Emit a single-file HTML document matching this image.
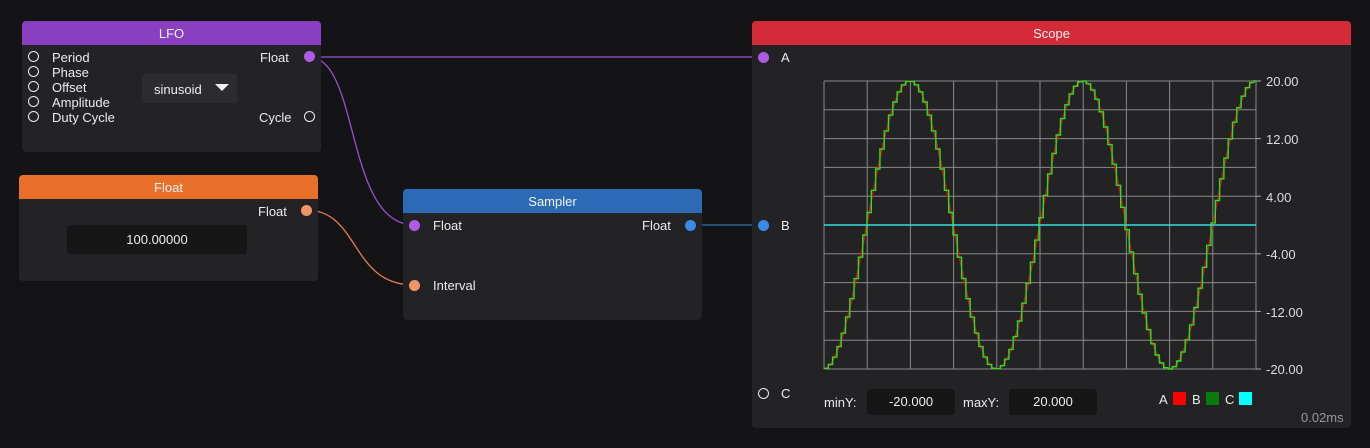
<!DOCTYPE html>
<html><head><meta charset="utf-8"><style>
body{margin:0;width:1370px;height:448px;background:#141416;overflow:hidden;position:relative;font-family:"Liberation Sans",sans-serif;color:#ececec;font-size:13px}
.node{position:absolute;background:#232325;border-radius:4px;overflow:hidden}
.hd{height:24px;line-height:26px;text-align:center;color:#f2f2f2;font-size:13px}
.t{position:absolute;white-space:nowrap;line-height:15px}
.pin{position:absolute;width:11px;height:11px;border-radius:50%;box-sizing:border-box}
.o{border:1.8px solid #eee}
.box{position:absolute;background:#161617;border-radius:3px;text-align:center;color:#eee}
svg{position:absolute;left:0;top:0}
</style></head><body>
<svg width="1370" height="448">
<path d="M309 57 L763 57" stroke="#9c4fd0" stroke-width="1.3" fill="none"/>
<path d="M309 57 C360 57 345 225 414 225" stroke="#9c4fd0" stroke-width="1.3" fill="none"/>
<path d="M306 210 C360 210 350 285 414 285" stroke="#e07a50" stroke-width="1.3" fill="none"/>
<path d="M690 225 L763 225" stroke="#2f6fb0" stroke-width="1.3" fill="none"/>
</svg>

<div class="node" style="left:22px;top:21px;width:299px;height:131px">
 <div class="hd" style="background:#8a3fc0">LFO</div>
</div>
<div class="pin o" style="left:28px;top:51px"></div><div class="t" style="left:52px;top:50px">Period</div>
<div class="pin o" style="left:28px;top:66px"></div><div class="t" style="left:52px;top:65px">Phase</div>
<div class="pin o" style="left:28px;top:81px"></div><div class="t" style="left:52px;top:80px">Offset</div>
<div class="pin o" style="left:28px;top:96px"></div><div class="t" style="left:52px;top:95px">Amplitude</div>
<div class="pin o" style="left:28px;top:111px"></div><div class="t" style="left:52px;top:110px">Duty Cycle</div>
<div class="t" style="left:260px;top:50px">Float</div><div class="pin" style="left:304px;top:51px;background:#b05be8"></div>
<div class="t" style="left:259px;top:110px">Cycle</div><div class="pin o" style="left:304px;top:111px"></div>
<div class="box" style="left:142px;top:74px;width:95px;height:29px;background:#2c2c2e"><span style="position:absolute;left:12px;top:8px">sinusoid</span>
<svg width="14" height="8" style="left:73px;top:10px"><path d="M0 0 L14 0 L7 7 Z" fill="#eee"/></svg></div>

<div class="node" style="left:19px;top:175px;width:299px;height:106px">
 <div class="hd" style="background:#e8702a">Float</div>
</div>
<div class="t" style="left:258px;top:204px">Float</div><div class="pin" style="left:301px;top:205px;background:#f0956a"></div>
<div class="box" style="left:67px;top:225px;width:180px;height:29px;line-height:30px">100.00000</div>

<div class="node" style="left:403px;top:189px;width:299px;height:131px">
 <div class="hd" style="background:#2d6ab5">Sampler</div>
</div>
<div class="pin" style="left:409px;top:220px;background:#b05be8"></div><div class="t" style="left:433px;top:218px">Float</div>
<div class="t" style="left:642px;top:218px">Float</div><div class="pin" style="left:685px;top:220px;background:#3a8ae8"></div>
<div class="pin" style="left:409px;top:280px;background:#f0956a"></div><div class="t" style="left:433px;top:278px">Interval</div>

<div class="node" style="left:752px;top:21px;width:599px;height:407px">
 <div class="hd" style="background:#d42a39">Scope</div>
</div>
<div class="pin" style="left:758px;top:52px;background:#b05be8"></div><div class="t" style="left:781px;top:50px">A</div>
<div class="pin" style="left:758px;top:220px;background:#3a8ae8"></div><div class="t" style="left:781px;top:218px">B</div>
<div class="pin o" style="left:758px;top:388px"></div><div class="t" style="left:781px;top:386px">C</div>

<svg width="1370" height="448" id="plot"></svg>
<div class="t" style="left:1266px;top:74px;color:#ddd">20.00</div>
<div class="t" style="left:1266px;top:132px;color:#ddd">12.00</div>
<div class="t" style="left:1266px;top:190px;color:#ddd">4.00</div>
<div class="t" style="left:1266px;top:247px;color:#ddd">-4.00</div>
<div class="t" style="left:1266px;top:305px;color:#ddd">-12.00</div>
<div class="t" style="left:1266px;top:362px;color:#ddd">-20.00</div>

<div class="t" style="left:824px;top:395px">minY:</div>
<div class="box" style="left:867px;top:389px;width:88px;height:26px;line-height:26px">-20.000</div>
<div class="t" style="left:963px;top:395px">maxY:</div>
<div class="box" style="left:1009px;top:389px;width:88px;height:26px;line-height:26px">20.000</div>
<div class="t" style="left:1159px;top:392px">A</div><div style="position:absolute;left:1173px;top:392px;width:13px;height:13px;background:#f00"></div>
<div class="t" style="left:1192px;top:392px">B</div><div style="position:absolute;left:1206px;top:392px;width:13px;height:13px;background:#0a7a0a"></div>
<div class="t" style="left:1225px;top:392px">C</div><div style="position:absolute;left:1239px;top:392px;width:13px;height:13px;background:#0ff"></div>
<div class="t" style="left:1301px;top:410px;color:#999">0.02ms</div>

<script>
var s='';
var x0=824,x1=1256,y0=81,y1=369;
for(var i=0;i<=10;i++){var x=x0+i*43.2;s+='<line x1="'+x+'" y1="'+y0+'" x2="'+x+'" y2="'+y1+'" stroke="#8a8a8a" stroke-width="1"/>';}
for(var i=0;i<=10;i++){var y=y0+i*28.8;s+='<line x1="'+x0+'" y1="'+y+'" x2="'+x1+'" y2="'+y+'" stroke="#8a8a8a" stroke-width="1"/>';}
for(var i=0;i<=5;i++){var y=y0+i*57.6;s+='<line x1="'+x1+'" y1="'+y+'" x2="'+(x1+5)+'" y2="'+y+'" stroke="#aaa"/>';}
function f(x){return 225-144*Math.cos(2*Math.PI*(x-910)/173);}
var r='M'+x0+' '+f(x0);for(var x=x0;x<=x1;x+=1)r+=' L'+x+' '+f(x).toFixed(1);
var g='',st=4.3,first=true;
for(var x=x0;x<x1;x+=st){var y=f(Math.min(x+st/2,x1)).toFixed(1);var xe=Math.min(x+st,x1);if(first){g='M'+x+' '+y;first=false;}else g+=' L'+x.toFixed(1)+' '+y;g+=' L'+xe.toFixed(1)+' '+y;}
s+='<path d="'+r+'" stroke="#e01010" stroke-width="1.4" fill="none"/>';
s+='<path d="'+g+'" stroke="#22e022" stroke-width="1.4" fill="none"/>';
s+='<line x1="'+x0+'" y1="225" x2="'+x1+'" y2="225" stroke="#30e0e0" stroke-width="1.5"/>';
document.getElementById('plot').innerHTML=s;
</script>
</body></html>
